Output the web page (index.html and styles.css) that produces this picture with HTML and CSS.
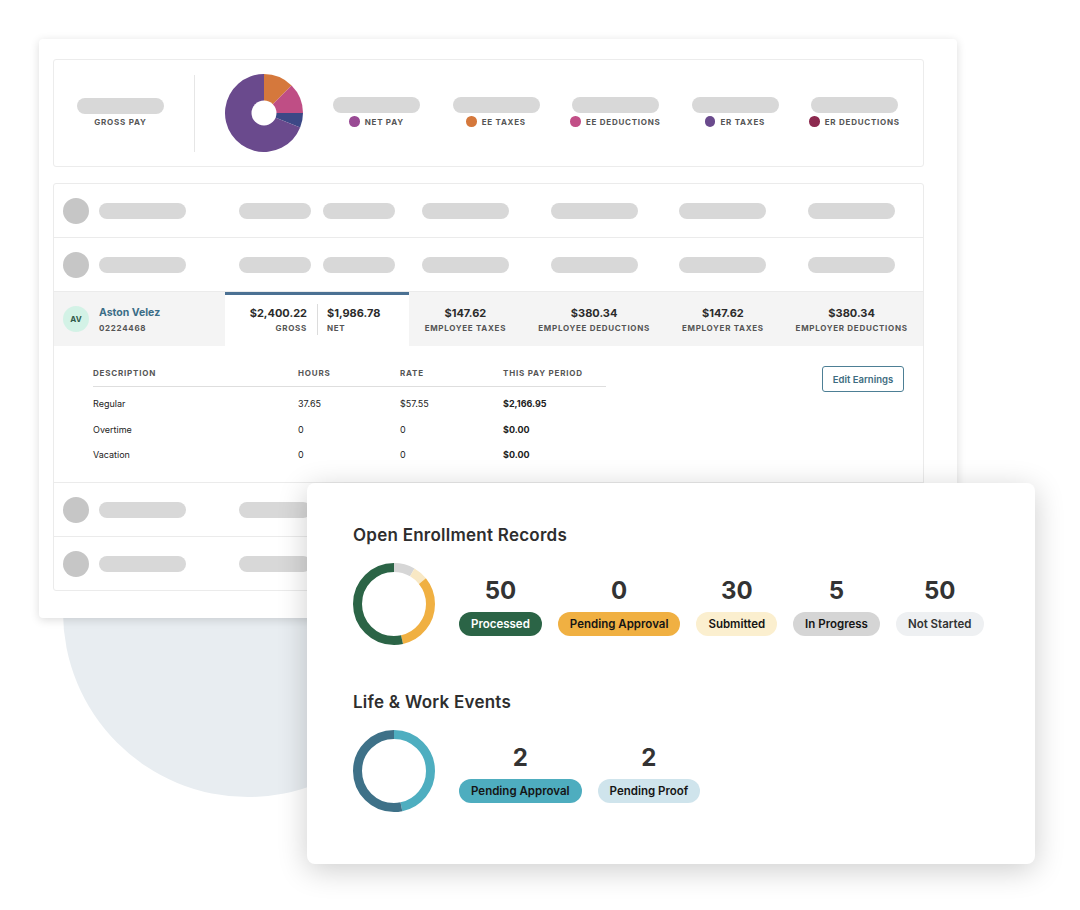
FILE: index.html
```html
<!DOCTYPE html>
<html lang="en">
<head>
<meta charset="utf-8">
<title>Payroll and Benefits</title>
<link rel="stylesheet" href="styles.css">
</head>
<body>
<div class="stage">
  <div class="bg-circle"></div>

  <section class="payroll-card">
    <div class="summary">
      <div class="gross">
        <span class="pill"></span>
        <span class="legend-label">GROSS PAY</span>
      </div>
      <span class="vdivider"></span>
      <svg class="pie" width="78" height="78" viewBox="0 0 78 78">
        <path d="M39 39 L39 0 A39 39 0 0 1 66.58 11.42 Z" fill="#d5783c"/>
        <path d="M39 39 L66.58 11.42 A39 39 0 0 1 78 39 Z" fill="#bf4e85"/>
        <path d="M39 39 L78 39 A39 39 0 0 1 75.16 53.61 Z" fill="#3c4886"/>
        <path d="M39 39 L75.16 53.61 A39 39 0 1 1 39 0 Z" fill="#6a4a8d"/>
        <circle cx="39" cy="39" r="12.5" fill="#fff"/>
      </svg>
      <div class="legends">
        <div class="legend">
          <span class="pill"></span>
          <span class="legend-label"><i class="dot dot-net"></i>NET PAY</span>
        </div>
        <div class="legend">
          <span class="pill"></span>
          <span class="legend-label"><i class="dot dot-eetax"></i>EE TAXES</span>
        </div>
        <div class="legend">
          <span class="pill"></span>
          <span class="legend-label"><i class="dot dot-eeded"></i>EE DEDUCTIONS</span>
        </div>
        <div class="legend">
          <span class="pill"></span>
          <span class="legend-label"><i class="dot dot-ertax"></i>ER TAXES</span>
        </div>
        <div class="legend">
          <span class="pill"></span>
          <span class="legend-label"><i class="dot dot-erded"></i>ER DEDUCTIONS</span>
        </div>
      </div>
    </div>

    <div class="table">
      <div class="row">
        <div class="who"><span class="avatar-ph"></span><span class="pill"></span></div>
        <div class="pay"><span class="pill small"></span><span class="pill small"></span></div>
        <div class="cell"><span class="pill"></span></div>
        <div class="cell"><span class="pill"></span></div>
        <div class="cell"><span class="pill"></span></div>
        <div class="cell"><span class="pill"></span></div>
      </div>
      <div class="row">
        <div class="who"><span class="avatar-ph"></span><span class="pill"></span></div>
        <div class="pay"><span class="pill small"></span><span class="pill small"></span></div>
        <div class="cell"><span class="pill"></span></div>
        <div class="cell"><span class="pill"></span></div>
        <div class="cell"><span class="pill"></span></div>
        <div class="cell"><span class="pill"></span></div>
      </div>
      <div class="row active">
        <div class="who">
          <span class="avatar">AV</span>
          <div class="person">
            <span class="name">Aston Velez</span>
            <span class="cap">02224468</span>
          </div>
        </div>
        <div class="pay selected">
          <div class="half left"><span class="val">$2,400.22</span><span class="cap">GROSS</span></div>
          <span class="sep"></span>
          <div class="half right"><span class="val">$1,986.78</span><span class="cap">NET</span></div>
        </div>
        <div class="cell stat"><span class="val">$147.62</span><span class="cap">EMPLOYEE TAXES</span></div>
        <div class="cell stat"><span class="val">$380.34</span><span class="cap">EMPLOYEE DEDUCTIONS</span></div>
        <div class="cell stat"><span class="val">$147.62</span><span class="cap">EMPLOYER TAXES</span></div>
        <div class="cell stat"><span class="val">$380.34</span><span class="cap">EMPLOYER DEDUCTIONS</span></div>
      </div>
      <div class="detail">
        <div class="earnings">
          <div class="erow ehead">
            <span>DESCRIPTION</span><span>HOURS</span><span>RATE</span><span>THIS PAY PERIOD</span>
          </div>
          <div class="ebody">
            <div class="erow"><span>Regular</span><span>37.65</span><span>$57.55</span><b>$2,166.95</b></div>
            <div class="erow"><span>Overtime</span><span>0</span><span>0</span><b>$0.00</b></div>
            <div class="erow"><span>Vacation</span><span>0</span><span>0</span><b>$0.00</b></div>
          </div>
        </div>
        <button class="edit-btn">Edit Earnings</button>
      </div>
      <div class="row">
        <div class="who"><span class="avatar-ph"></span><span class="pill"></span></div>
        <div class="pay"><span class="pill small"></span><span class="pill small"></span></div>
        <div class="cell"><span class="pill"></span></div>
        <div class="cell"><span class="pill"></span></div>
        <div class="cell"><span class="pill"></span></div>
        <div class="cell"><span class="pill"></span></div>
      </div>
      <div class="row last">
        <div class="who"><span class="avatar-ph"></span><span class="pill"></span></div>
        <div class="pay"><span class="pill small"></span><span class="pill small"></span></div>
        <div class="cell"><span class="pill"></span></div>
        <div class="cell"><span class="pill"></span></div>
        <div class="cell"><span class="pill"></span></div>
        <div class="cell"><span class="pill"></span></div>
      </div>
    </div>
  </section>

  <section class="benefits-card">
    <h2 class="title">Open Enrollment Records</h2>
    <div class="group">
      <svg class="donut" width="82" height="82" viewBox="0 0 82 82">
        <g transform="rotate(-90 41 41)" fill="none" stroke-width="9">
          <circle cx="41" cy="41" r="36.5" stroke="#d6d6d6" stroke-dasharray="19.11 229.34" stroke-dashoffset="0"/>
          <circle cx="41" cy="41" r="36.5" stroke="#f8e8c4" stroke-dasharray="13.38 229.34" stroke-dashoffset="-19.11"/>
          <circle cx="41" cy="41" r="36.5" stroke="#f0b042" stroke-dasharray="73.9 229.34" stroke-dashoffset="-32.49"/>
          <circle cx="41" cy="41" r="36.5" stroke="#2b6446" stroke-dasharray="122.96 229.34" stroke-dashoffset="-106.39"/>
        </g>
      </svg>
      <div class="stats">
        <div class="stat-item"><span class="num">50</span><span class="badge b-processed">Processed</span></div>
        <div class="stat-item"><span class="num">0</span><span class="badge b-pending">Pending Approval</span></div>
        <div class="stat-item"><span class="num">30</span><span class="badge b-submitted">Submitted</span></div>
        <div class="stat-item"><span class="num">5</span><span class="badge b-progress">In Progress</span></div>
        <div class="stat-item"><span class="num">50</span><span class="badge b-notstarted">Not Started</span></div>
      </div>
    </div>

    <h2 class="title second">Life &amp; Work Events</h2>
    <div class="group">
      <svg class="donut" width="82" height="82" viewBox="0 0 82 82">
        <g transform="rotate(-90 41 41)" fill="none" stroke-width="9">
          <circle cx="41" cy="41" r="36.5" stroke="#4eaec0" stroke-dasharray="107.03 229.34" stroke-dashoffset="0"/>
          <circle cx="41" cy="41" r="36.5" stroke="#3e7188" stroke-dasharray="122.31 229.34" stroke-dashoffset="-107.03"/>
        </g>
      </svg>
      <div class="stats">
        <div class="stat-item"><span class="num">2</span><span class="badge b-teal">Pending Approval</span></div>
        <div class="stat-item"><span class="num">2</span><span class="badge b-proof">Pending Proof</span></div>
      </div>
    </div>
  </section>
</div>
</body>
</html>
```
FILE: styles.css
```css
* { box-sizing: border-box; }

html, body {
  margin: 0;
  padding: 0;
  background: #ffffff;
}

body {
  font-family: "Inter", "Lato", "Liberation Sans", sans-serif;
  color: #2e2e2e;
}

.stage {
  position: relative;
  width: 1080px;
  height: 910px;
  overflow: hidden;
  padding: 39px 0 0 39px;
}

.bg-circle {
  position: absolute;
  left: 63px;
  top: 427px;
  width: 370px;
  height: 370px;
  border-radius: 50%;
  background: #e8edf1;
}

/* ---------- payroll card ---------- */
.payroll-card {
  position: relative;
  width: 918px;
  height: 579px;
  padding: 20px 33px 0 14px;
  background: #fff;
  border-radius: 4px;
  box-shadow: 0 2px 10px rgba(0, 0, 0, 0.14);
}

.pill {
  display: block;
  width: 87px;
  height: 16px;
  border-radius: 8px;
  background: #d8d8d8;
}
.pill.small { width: 72px; }

.summary {
  display: flex;
  align-items: center;
  height: 108px;
  border: 1px solid #ececec;
  border-radius: 3px;
}

.gross {
  margin-left: 23px;
  width: 87px;
  padding-bottom: 2px;
  display: flex;
  flex-direction: column;
  align-items: center;
}

.legend-label {
  display: flex;
  align-items: center;
  margin-top: 3px;
  gap: 5px;
  font-size: 8px;
  line-height: 10px;
  font-weight: 700;
  letter-spacing: 0.75px;
  color: #555;
  white-space: nowrap;
}

.vdivider {
  display: block;
  margin-left: 30px;
  width: 1px;
  height: 77px;
  background: #e6e6e6;
}

.pie {
  display: block;
  margin-left: 30px;
}

.legends {
  display: flex;
  gap: 32.5px;
  margin-left: 30px;
}

.legend {
  width: 87px;
  padding-bottom: 2px;
  display: flex;
  flex-direction: column;
  align-items: center;
}

.dot {
  display: block;
  width: 10.5px;
  height: 10.5px;
  border-radius: 50%;
}
.dot-net { background: #994a94; }
.dot-eetax { background: #d5783c; }
.dot-eeded { background: #c24f87; }
.dot-ertax { background: #6a4a8d; }
.dot-erded { background: #8c2a4f; }

/* ---------- table ---------- */
.table {
  margin-top: 16px;
  border: 1px solid #ebebeb;
  border-radius: 3px;
}

.row {
  display: grid;
  grid-template-columns: 171px 176px repeat(4, 1fr);
  padding-right: 7px;
  height: 54px;
  align-items: center;
  border-bottom: 1px solid #ebebeb;
}
.row.last { border-bottom: none; height: 53px; }
.row.active {
  background: #f4f4f4;
  border-bottom: none;
}

.who {
  display: flex;
  align-items: center;
  gap: 10px;
  padding-left: 9px;
}

.avatar-ph {
  display: block;
  width: 26px;
  height: 26px;
  border-radius: 50%;
  background: #c6c6c6;
}

.avatar {
  display: flex;
  align-items: center;
  justify-content: center;
  width: 26px;
  height: 26px;
  border-radius: 50%;
  background: #d3f2e6;
  color: #2f5a4a;
  font-size: 8px;
  font-weight: 700;
}

.person {
  display: flex;
  flex-direction: column;
}

.name {
  font-size: 10.5px;
  line-height: 14px;
  font-weight: 700;
  color: #3b6d87;
}

.cap {
  margin-top: 3px;
  font-size: 8px;
  line-height: 10px;
  font-weight: 700;
  letter-spacing: 0.7px;
  color: #555;
  white-space: nowrap;
}

.val {
  font-size: 11px;
  line-height: 14px;
  font-weight: 700;
  color: #2b2b2b;
}

.pay {
  display: flex;
  justify-content: center;
  gap: 12px;
  margin-right: -8px;
}

.pay.selected {
  align-self: stretch;
  gap: 0;
  justify-content: flex-start;
  align-items: center;
  background: #fff;
  box-shadow: inset 0 3px 0 #4b7193;
}

.half {
  display: flex;
  flex-direction: column;
}
.half.left {
  width: 92px;
  align-items: flex-end;
  padding-right: 10px;
}
.half.right {
  align-items: flex-start;
  padding-left: 9px;
}

.sep {
  display: block;
  width: 1px;
  height: 31px;
  background: #dcdcdc;
}

.cell {
  display: flex;
  justify-content: center;
}
.cell.stat {
  flex-direction: column;
  align-items: center;
}

/* ---------- detail ---------- */
.detail {
  display: flex;
  justify-content: space-between;
  align-items: flex-start;
  height: 137px;
  padding: 22px 19px 0 39px;
  border-bottom: 1px solid #ebebeb;
  background: #fff;
}

.earnings { width: 513px; }

.erow {
  display: grid;
  grid-template-columns: 205px 102px 103px 103px;
  font-size: 9px;
  line-height: 25.5px;
  color: #222;
}
.erow b { font-weight: 700; }

.ehead {
  font-size: 8px;
  line-height: 10px;
  font-weight: 700;
  letter-spacing: 0.8px;
  color: #555;
  padding-bottom: 8px;
  border-bottom: 1px solid #dedede;
}

.ebody { padding-top: 4px; }

.edit-btn {
  margin-top: -2px;
  width: 82px;
  height: 26px;
  padding: 0;
  border: 1px solid #4d7f95;
  border-radius: 3px;
  background: #fff;
  font-family: inherit;
  font-size: 9.5px;
  font-weight: 600;
  color: #3d6c80;
}

/* ---------- benefits card ---------- */
.benefits-card {
  position: absolute;
  left: 307px;
  top: 483px;
  width: 728px;
  height: 381px;
  padding: 42px 0 0 46px;
  background: #fff;
  border-radius: 8px;
  box-shadow: 0 6px 30px rgba(0, 0, 0, 0.2);
}

.title {
  margin: 0;
  font-size: 17px;
  line-height: 20px;
  font-weight: 600;
  letter-spacing: 0.25px;
  color: #2e2e2e;
}
.title.second { margin-top: 47px; }

.group {
  display: flex;
  align-items: flex-start;
  margin-top: 18px;
}

.donut { display: block; }

.stats {
  display: flex;
  gap: 16px;
  margin-left: 24px;
  margin-top: 15px;
}

.stat-item {
  display: flex;
  flex-direction: column;
  align-items: center;
}

.num {
  font-size: 24px;
  line-height: 26px;
  font-weight: 700;
  color: #333;
}

.badge {
  margin-top: 8px;
  height: 24px;
  padding: 0 12px;
  border-radius: 12px;
  font-size: 11.5px;
  line-height: 24px;
  font-weight: 600;
  color: #151515;
  white-space: nowrap;
}
.b-processed { background: #2b6446; color: #fff; }
.b-pending { background: #f0b042; }
.b-submitted { background: #fbefcf; }
.b-progress { background: #d5d5d5; }
.b-notstarted { background: #eef0f2; color: #333; }
.b-teal { background: #4eadbf; }
.b-proof { background: #cfe4ec; }
```
